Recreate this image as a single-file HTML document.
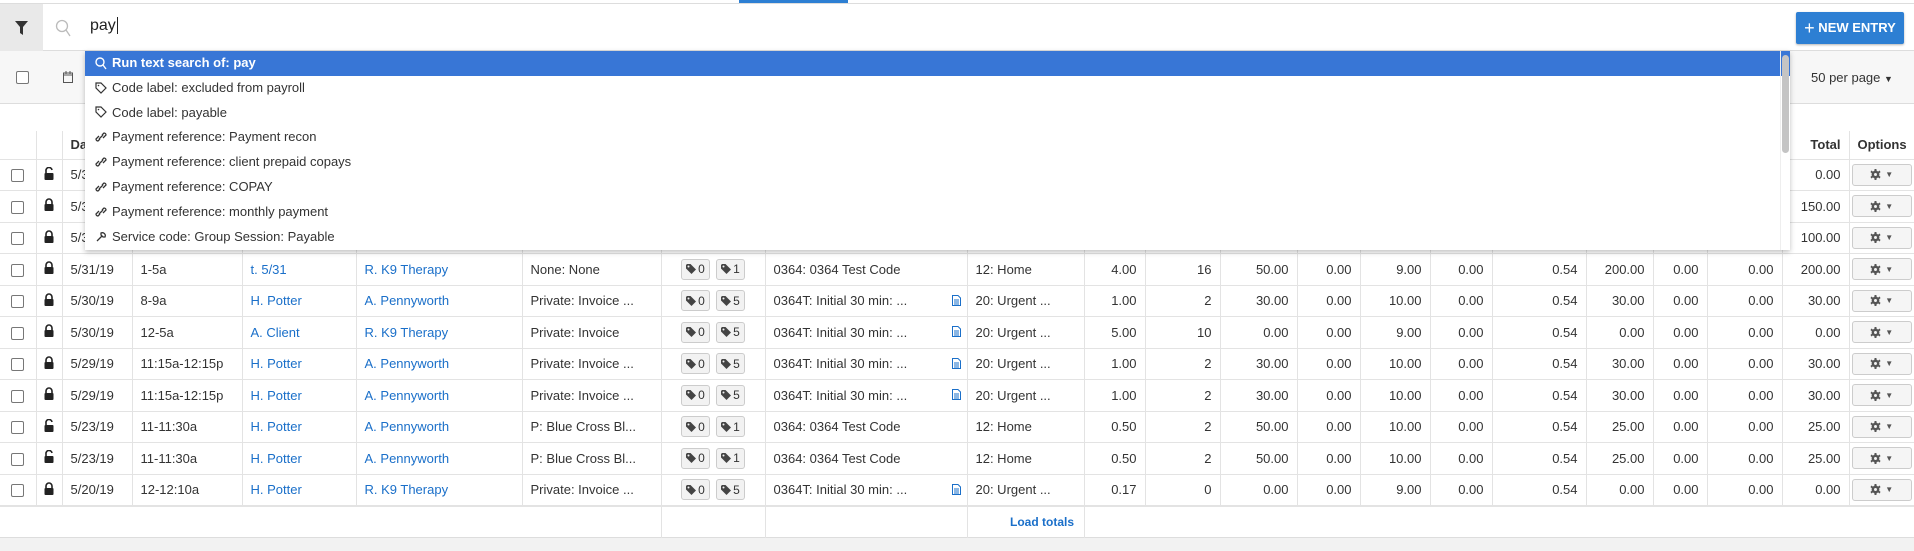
<!DOCTYPE html>
<html><head><meta charset="utf-8"><style>
*{box-sizing:border-box;margin:0;padding:0}
body{width:1914px;height:551px;overflow:hidden;background:#fff;font-family:"Liberation Sans",sans-serif;font-size:13px;color:#333;position:relative}
.abs{position:absolute}
table{position:absolute;left:0;top:131px;border-collapse:collapse;table-layout:fixed;width:1914px}
td{border:1px solid #e3e3e3;height:31.5px;padding:0 8px;white-space:nowrap;overflow:hidden;vertical-align:middle;position:relative}
td:first-child{border-left:none}
td:last-child{border-right:none}
tr.h td{height:28px;font-weight:bold;border-top:none}
td.r{text-align:right}
td.c{text-align:center;padding:0}
a{color:#1a6fc9;text-decoration:none}
.cb{display:inline-block;width:13px;height:13px;border:1px solid #777;border-radius:2px;background:#fff;vertical-align:middle}
.tag{display:inline-flex;align-items:center;justify-content:center;gap:2px;width:29px;height:21px;border:1px solid #ccc;border-radius:3px;background:#f2f2f2;vertical-align:middle;font-size:12px;margin:0 3px}
.opt{display:inline-flex;align-items:center;justify-content:center;gap:4px;width:60px;height:22px;border:1px solid #ccc;border-radius:3px;background:#f5f5f5;vertical-align:middle;font-size:8px;color:#555}
.doc{position:absolute;right:6px;top:9px}
.dd{left:85px;top:51px;width:1705px;height:199px;background:#fff;box-shadow:0 2px 5px rgba(0,0,0,.25);z-index:5}
.it{height:24.8px;line-height:24.8px;padding-left:10px;font-size:13px;color:#333;display:flex;align-items:center}
.it svg{margin-right:5px}
.sel{background:#3876d6;color:#fff;font-weight:bold}
</style></head><body>
<svg width="0" height="0" style="position:absolute"><defs>
<symbol id="lk" viewBox="0 0 10 13"><path d="M2 6V4A3 3 0 0 1 8 4V6" fill="none" stroke="#222" stroke-width="1.6"/><rect x="0.5" y="6" width="9" height="7" rx="1" fill="#222"/></symbol>
<symbol id="ul" viewBox="0 0 10 13"><path d="M2 6V4A3 3 0 0 1 8 3" fill="none" stroke="#222" stroke-width="1.6"/><rect x="0.5" y="6" width="9" height="7" rx="1" fill="#222"/></symbol>
<symbol id="tg" viewBox="0 0 10 10"><path d="M0 1V4.5L5.5 10L10 5.5L4.5 0H1Z" fill="#444"/><circle cx="2.5" cy="2.5" r="1" fill="#f2f2f2"/></symbol>
<symbol id="gr" viewBox="0 0 12 12"><path d="M5 0H7L7.3 2A4 4 0 0 1 8.8 2.8L10.5 1.7L11.5 3.4L10 4.6A4 4 0 0 1 10 7.4L11.5 8.6L10.5 10.3L8.8 9.2A4 4 0 0 1 7.3 10L7 12H5L4.7 10A4 4 0 0 1 3.2 9.2L1.5 10.3L.5 8.6L2 7.4A4 4 0 0 1 2 4.6L.5 3.4L1.5 1.7L3.2 2.8A4 4 0 0 1 4.7 2Z" fill="#555"/><circle cx="6" cy="6" r="1.6" fill="#f5f5f5"/></symbol>
<symbol id="dc" viewBox="0 0 9 11"><path d="M.5 .5H6L8.5 3V10.5H.5Z" fill="none" stroke="#1a6fc9"/><path d="M2 5H7M2 7H7M2 9H7" stroke="#1a6fc9"/></symbol>
</defs></svg>
<!-- tab strip -->
<div class="abs" style="left:0;top:0;width:1914px;height:4px;background:#fff;border-bottom:1px solid #ddd"></div>
<div class="abs" style="left:739px;top:0;width:109px;height:3px;background:#2d7fd3"></div>
<!-- search bar -->
<div class="abs" style="left:0;top:4px;width:1914px;height:47px;background:#fff;border-bottom:1px solid #ddd;z-index:4"></div>
<div class="abs" style="left:0;top:4px;width:43px;height:47px;background:#e9e9e9;z-index:4;display:flex;align-items:center;justify-content:center">
<svg width="13" height="14" viewBox="0 0 13 14"><path d="M0 0H13L8 6V14L5 12V6Z" fill="#333"/></svg></div>
<svg class="abs" style="left:55px;top:19px;z-index:4" width="16" height="18" viewBox="0 0 16 18"><circle cx="7" cy="7" r="5.5" fill="none" stroke="#bbb" stroke-width="1.3"/><path d="M11 11L15 17" stroke="#bbb" stroke-width="1.3"/></svg>
<div class="abs" style="left:90px;top:17px;font-size:16px;color:#222;z-index:4">pay<span style="border-left:1px solid #222;margin-left:1px"></span></div>
<div class="abs" style="left:1796px;top:12px;width:108px;height:32px;background:#2d7fd3;border-radius:2px;color:#fff;font-weight:bold;font-size:13px;line-height:32px;text-align:center;z-index:4;box-shadow:0 1px 2px rgba(0,0,0,.3)"><span style="font-size:18px;font-weight:normal;vertical-align:-2px">+</span> NEW ENTRY</div>
<!-- toolbar -->
<div class="abs" style="left:0;top:51px;width:1914px;height:53px;background:#f7f7f7;border-bottom:1px solid #ddd"></div>
<span class="cb abs" style="left:16px;top:71px"></span>
<svg class="abs" style="left:63px;top:71px" width="10" height="12" viewBox="0 0 10 12"><rect x="0.5" y="2" width="9" height="9.5" fill="none" stroke="#555"/><path d="M0 4H10M3 0V3M7 0V3" stroke="#555"/></svg>
<div class="abs" style="left:1811px;top:70px;font-size:13px;color:#333">50 per page <span style="font-size:9px">▼</span></div>
<!-- dropdown -->
<div class="abs dd">
<div class="it sel"><svg width="12" height="13" viewBox="0 0 12 13"><circle cx="5" cy="5" r="4" fill="none" stroke="#fff" stroke-width="1.4"/><path d="M8 8L11 12" stroke="#fff" stroke-width="1.4"/></svg>Run text search of: pay</div>
<div class="it"><svg width="12" height="13" viewBox="0 0 12 13"><path d="M1 1H6L11 6L6 11L1 6Z" fill="none" stroke="#333" stroke-width="1.2"/><circle cx="3.5" cy="3.5" r=".8" fill="#333"/></svg>Code label: excluded from payroll</div>
<div class="it"><svg width="12" height="13" viewBox="0 0 12 13"><path d="M1 1H6L11 6L6 11L1 6Z" fill="none" stroke="#333" stroke-width="1.2"/><circle cx="3.5" cy="3.5" r=".8" fill="#333"/></svg>Code label: payable</div>
<div class="it"><svg width="12" height="13" viewBox="0 0 12 13"><path d="M5 8L3 10A2 2 0 0 1 1 8L4 5M7 4L9 2A2 2 0 0 1 11 4L8 7M4 8L8 4" fill="none" stroke="#333" stroke-width="1.3"/></svg>Payment reference: Payment recon</div>
<div class="it"><svg width="12" height="13" viewBox="0 0 12 13"><path d="M5 8L3 10A2 2 0 0 1 1 8L4 5M7 4L9 2A2 2 0 0 1 11 4L8 7M4 8L8 4" fill="none" stroke="#333" stroke-width="1.3"/></svg>Payment reference: client prepaid copays</div>
<div class="it"><svg width="12" height="13" viewBox="0 0 12 13"><path d="M5 8L3 10A2 2 0 0 1 1 8L4 5M7 4L9 2A2 2 0 0 1 11 4L8 7M4 8L8 4" fill="none" stroke="#333" stroke-width="1.3"/></svg>Payment reference: COPAY</div>
<div class="it"><svg width="12" height="13" viewBox="0 0 12 13"><path d="M5 8L3 10A2 2 0 0 1 1 8L4 5M7 4L9 2A2 2 0 0 1 11 4L8 7M4 8L8 4" fill="none" stroke="#333" stroke-width="1.3"/></svg>Payment reference: monthly payment</div>
<div class="it"><svg width="12" height="13" viewBox="0 0 12 13"><path d="M2 11L7 6M6 3A3 3 0 0 1 10 7L8 7L6 5Z" fill="none" stroke="#333" stroke-width="1.3"/></svg>Service code: Group Session: Payable</div>
<div class="abs" style="right:1px;top:4px;width:7px;height:98px;background:#c4c4c4;border-radius:4px"></div>
<div class="abs" style="right:0;top:0;width:10px;height:199px;border-left:1px solid #eee"></div>
</div>
<table>
<colgroup><col style="width:36px"><col style="width:26px"><col style="width:70px"><col style="width:110px"><col style="width:114px"><col style="width:166px"><col style="width:139px"><col style="width:104px"><col style="width:202px"><col style="width:117px"><col style="width:61px"><col style="width:75px"><col style="width:77px"><col style="width:63px"><col style="width:70px"><col style="width:62px"><col style="width:94px"><col style="width:67px"><col style="width:54px"><col style="width:75px"><col style="width:67px"><col style="width:65px"></colgroup>
<tr class="h"><td></td><td></td><td>Date</td><td></td><td></td><td></td><td></td><td></td><td></td><td></td><td></td><td></td><td></td><td></td><td></td><td></td><td></td><td></td><td></td><td></td><td class="r">Total</td><td class="r">Options</td></tr>
<tr><td class="c"><span class="cb"></span></td><td class="c"><svg width="10" height="13"><use href="#ul"/></svg></td><td>5/31/19</td><td></td><td></td><td></td><td></td><td></td><td></td><td></td><td></td><td></td><td></td><td></td><td></td><td></td><td></td><td></td><td></td><td></td><td class="r">0.00</td><td class="c"><span class="opt"><svg width="11" height="11"><use href="#gr"/></svg>▼</span></td></tr>
<tr><td class="c"><span class="cb"></span></td><td class="c"><svg width="10" height="13"><use href="#lk"/></svg></td><td>5/31/19</td><td></td><td></td><td></td><td></td><td></td><td></td><td></td><td></td><td></td><td></td><td></td><td></td><td></td><td></td><td></td><td></td><td></td><td class="r">150.00</td><td class="c"><span class="opt"><svg width="11" height="11"><use href="#gr"/></svg>▼</span></td></tr>
<tr><td class="c"><span class="cb"></span></td><td class="c"><svg width="10" height="13"><use href="#lk"/></svg></td><td>5/31/19</td><td></td><td></td><td></td><td></td><td></td><td></td><td></td><td></td><td></td><td></td><td></td><td></td><td></td><td></td><td></td><td></td><td></td><td class="r">100.00</td><td class="c"><span class="opt"><svg width="11" height="11"><use href="#gr"/></svg>▼</span></td></tr>
<tr><td class="c"><span class="cb"></span></td><td class="c"><svg width="10" height="13"><use href="#lk"/></svg></td><td>5/31/19</td><td>1-5a</td><td><a>t. 5/31</a></td><td><a>R. K9 Therapy</a></td><td>None: None</td><td class="c"><span class="tag"><svg width="10" height="10"><use href="#tg"/></svg>0</span><span class="tag"><svg width="10" height="10"><use href="#tg"/></svg>1</span></td><td>0364: 0364 Test Code</td><td>12: Home</td><td class="r">4.00</td><td class="r">16</td><td class="r">50.00</td><td class="r">0.00</td><td class="r">9.00</td><td class="r">0.00</td><td class="r">0.54</td><td class="r">200.00</td><td class="r">0.00</td><td class="r">0.00</td><td class="r">200.00</td><td class="c"><span class="opt"><svg width="11" height="11"><use href="#gr"/></svg>▼</span></td></tr>
<tr><td class="c"><span class="cb"></span></td><td class="c"><svg width="10" height="13"><use href="#lk"/></svg></td><td>5/30/19</td><td>8-9a</td><td><a>H. Potter</a></td><td><a>A. Pennyworth</a></td><td>Private: Invoice ...</td><td class="c"><span class="tag"><svg width="10" height="10"><use href="#tg"/></svg>0</span><span class="tag"><svg width="10" height="10"><use href="#tg"/></svg>5</span></td><td>0364T: Initial 30 min: ...<svg class="doc" width="9" height="11"><use href="#dc"/></svg></td><td>20: Urgent ...</td><td class="r">1.00</td><td class="r">2</td><td class="r">30.00</td><td class="r">0.00</td><td class="r">10.00</td><td class="r">0.00</td><td class="r">0.54</td><td class="r">30.00</td><td class="r">0.00</td><td class="r">0.00</td><td class="r">30.00</td><td class="c"><span class="opt"><svg width="11" height="11"><use href="#gr"/></svg>▼</span></td></tr>
<tr><td class="c"><span class="cb"></span></td><td class="c"><svg width="10" height="13"><use href="#lk"/></svg></td><td>5/30/19</td><td>12-5a</td><td><a>A. Client</a></td><td><a>R. K9 Therapy</a></td><td>Private: Invoice</td><td class="c"><span class="tag"><svg width="10" height="10"><use href="#tg"/></svg>0</span><span class="tag"><svg width="10" height="10"><use href="#tg"/></svg>5</span></td><td>0364T: Initial 30 min: ...<svg class="doc" width="9" height="11"><use href="#dc"/></svg></td><td>20: Urgent ...</td><td class="r">5.00</td><td class="r">10</td><td class="r">0.00</td><td class="r">0.00</td><td class="r">9.00</td><td class="r">0.00</td><td class="r">0.54</td><td class="r">0.00</td><td class="r">0.00</td><td class="r">0.00</td><td class="r">0.00</td><td class="c"><span class="opt"><svg width="11" height="11"><use href="#gr"/></svg>▼</span></td></tr>
<tr><td class="c"><span class="cb"></span></td><td class="c"><svg width="10" height="13"><use href="#lk"/></svg></td><td>5/29/19</td><td>11:15a-12:15p</td><td><a>H. Potter</a></td><td><a>A. Pennyworth</a></td><td>Private: Invoice ...</td><td class="c"><span class="tag"><svg width="10" height="10"><use href="#tg"/></svg>0</span><span class="tag"><svg width="10" height="10"><use href="#tg"/></svg>5</span></td><td>0364T: Initial 30 min: ...<svg class="doc" width="9" height="11"><use href="#dc"/></svg></td><td>20: Urgent ...</td><td class="r">1.00</td><td class="r">2</td><td class="r">30.00</td><td class="r">0.00</td><td class="r">10.00</td><td class="r">0.00</td><td class="r">0.54</td><td class="r">30.00</td><td class="r">0.00</td><td class="r">0.00</td><td class="r">30.00</td><td class="c"><span class="opt"><svg width="11" height="11"><use href="#gr"/></svg>▼</span></td></tr>
<tr><td class="c"><span class="cb"></span></td><td class="c"><svg width="10" height="13"><use href="#lk"/></svg></td><td>5/29/19</td><td>11:15a-12:15p</td><td><a>H. Potter</a></td><td><a>A. Pennyworth</a></td><td>Private: Invoice ...</td><td class="c"><span class="tag"><svg width="10" height="10"><use href="#tg"/></svg>0</span><span class="tag"><svg width="10" height="10"><use href="#tg"/></svg>5</span></td><td>0364T: Initial 30 min: ...<svg class="doc" width="9" height="11"><use href="#dc"/></svg></td><td>20: Urgent ...</td><td class="r">1.00</td><td class="r">2</td><td class="r">30.00</td><td class="r">0.00</td><td class="r">10.00</td><td class="r">0.00</td><td class="r">0.54</td><td class="r">30.00</td><td class="r">0.00</td><td class="r">0.00</td><td class="r">30.00</td><td class="c"><span class="opt"><svg width="11" height="11"><use href="#gr"/></svg>▼</span></td></tr>
<tr><td class="c"><span class="cb"></span></td><td class="c"><svg width="10" height="13"><use href="#ul"/></svg></td><td>5/23/19</td><td>11-11:30a</td><td><a>H. Potter</a></td><td><a>A. Pennyworth</a></td><td>P: Blue Cross Bl...</td><td class="c"><span class="tag"><svg width="10" height="10"><use href="#tg"/></svg>0</span><span class="tag"><svg width="10" height="10"><use href="#tg"/></svg>1</span></td><td>0364: 0364 Test Code</td><td>12: Home</td><td class="r">0.50</td><td class="r">2</td><td class="r">50.00</td><td class="r">0.00</td><td class="r">10.00</td><td class="r">0.00</td><td class="r">0.54</td><td class="r">25.00</td><td class="r">0.00</td><td class="r">0.00</td><td class="r">25.00</td><td class="c"><span class="opt"><svg width="11" height="11"><use href="#gr"/></svg>▼</span></td></tr>
<tr><td class="c"><span class="cb"></span></td><td class="c"><svg width="10" height="13"><use href="#ul"/></svg></td><td>5/23/19</td><td>11-11:30a</td><td><a>H. Potter</a></td><td><a>A. Pennyworth</a></td><td>P: Blue Cross Bl...</td><td class="c"><span class="tag"><svg width="10" height="10"><use href="#tg"/></svg>0</span><span class="tag"><svg width="10" height="10"><use href="#tg"/></svg>1</span></td><td>0364: 0364 Test Code</td><td>12: Home</td><td class="r">0.50</td><td class="r">2</td><td class="r">50.00</td><td class="r">0.00</td><td class="r">10.00</td><td class="r">0.00</td><td class="r">0.54</td><td class="r">25.00</td><td class="r">0.00</td><td class="r">0.00</td><td class="r">25.00</td><td class="c"><span class="opt"><svg width="11" height="11"><use href="#gr"/></svg>▼</span></td></tr>
<tr><td class="c"><span class="cb"></span></td><td class="c"><svg width="10" height="13"><use href="#lk"/></svg></td><td>5/20/19</td><td>12-12:10a</td><td><a>H. Potter</a></td><td><a>R. K9 Therapy</a></td><td>Private: Invoice ...</td><td class="c"><span class="tag"><svg width="10" height="10"><use href="#tg"/></svg>0</span><span class="tag"><svg width="10" height="10"><use href="#tg"/></svg>5</span></td><td>0364T: Initial 30 min: ...<svg class="doc" width="9" height="11"><use href="#dc"/></svg></td><td>20: Urgent ...</td><td class="r">0.17</td><td class="r">0</td><td class="r">0.00</td><td class="r">0.00</td><td class="r">9.00</td><td class="r">0.00</td><td class="r">0.54</td><td class="r">0.00</td><td class="r">0.00</td><td class="r">0.00</td><td class="r">0.00</td><td class="c"><span class="opt"><svg width="11" height="11"><use href="#gr"/></svg>▼</span></td></tr>
</table>
<!-- totals row -->
<div class="abs" style="left:0;top:506px;width:1914px;height:32px;border-top:1px solid #e3e3e3;border-bottom:1px solid #ddd;background:#fff"></div>
<div class="abs" style="left:661px;top:506px;width:1px;height:32px;background:#e3e3e3"></div>
<div class="abs" style="left:765px;top:506px;width:1px;height:32px;background:#e3e3e3"></div>
<div class="abs" style="left:967px;top:506px;width:1px;height:32px;background:#e3e3e3"></div>
<div class="abs" style="left:1084px;top:506px;width:1px;height:32px;background:#e3e3e3"></div>
<div class="abs" style="left:1010px;top:515px;color:#1a6fc9;font-weight:bold;font-size:12px">Load totals</div>
<div class="abs" style="left:0;top:538px;width:1914px;height:13px;background:#f2f2f2"></div>
</body></html>
